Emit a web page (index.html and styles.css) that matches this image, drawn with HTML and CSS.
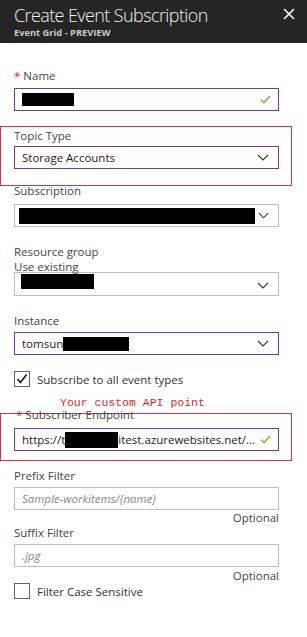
FILE: index.html
```html
<!DOCTYPE html>
<html>
<head>
<meta charset="utf-8">
<link rel="stylesheet" href="styles.css">
</head>
<body>
<div class="blade">
  <header class="head">
    <div class="head-text">
      <div class="title">Create Event Subscription</div>
      <div class="subtitle">Event Grid - PREVIEW</div>
    </div>
    <svg class="close" width="12" height="12" viewBox="0 0 12 12"><path d="M1 1L11 11M11 1L1 11" stroke="#fff" stroke-width="1.6"/></svg>
  </header>

  <div class="form">
    <div class="field f-name">
      <div class="label"><span class="star">*</span> Name</div>
      <div class="box active">
        <span class="redact r-name"></span>
        <svg class="check" width="11" height="9" viewBox="0 0 11 9"><path d="M1 4.5L4 7.5L10 1" fill="none" stroke="#7ab648" stroke-width="1.6"/></svg>
      </div>
    </div>

    <div class="annot a1">
      <div class="field f-topic">
        <div class="label">Topic Type</div>
        <div class="box active">
          <span class="val">Storage Accounts</span>
          <svg class="chev" width="12" height="7" viewBox="0 0 12 7"><path d="M1 1L6 6L11 1" fill="none" stroke="#333" stroke-width="1.1"/></svg>
        </div>
      </div>
    </div>

    <div class="field f-sub">
      <div class="label">Subscription</div>
      <div class="box">
        <span class="redact r-sub"></span>
        <svg class="chev" width="12" height="7" viewBox="0 0 12 7"><path d="M1 1L6 6L11 1" fill="none" stroke="#333" stroke-width="1.1"/></svg>
      </div>
    </div>

    <div class="field f-rg">
      <div class="label">Resource group</div>
      <div class="label">Use existing</div>
      <div class="box tall">
        <span class="redact r-rg"></span>
        <svg class="chev" width="12" height="7" viewBox="0 0 12 7"><path d="M1 1L6 6L11 1" fill="none" stroke="#333" stroke-width="1.1"/></svg>
      </div>
    </div>

    <div class="field f-inst">
      <div class="label">Instance</div>
      <div class="box active">
        <span class="val">tomsun</span><span class="redact r-inst"></span>
        <svg class="chev" width="12" height="7" viewBox="0 0 12 7"><path d="M1 1L6 6L11 1" fill="none" stroke="#333" stroke-width="1.1"/></svg>
      </div>
    </div>

    <label class="cb-row cb-all">
      <span class="cb"><svg width="14" height="14" viewBox="0 0 14 14"><path d="M2.5 7L5.5 10.5L11.5 2.5" fill="none" stroke="#111" stroke-width="1.5"/></svg></span>
      <span class="cb-text">Subscribe to all event types</span>
    </label>

    <div class="note">Your custom API point</div>

    <div class="annot a2">
      <div class="field f-end">
        <div class="label lbl-end"><span class="star">*</span> Subscriber Endpoint</div>
        <div class="box active">
          <span class="val">https://t</span><span class="redact r-end"></span><span class="val url-rest">itest.azurewebsites.net/...</span>
          <svg class="check" width="11" height="9" viewBox="0 0 11 9"><path d="M1 4.5L4 7.5L10 1" fill="none" stroke="#7ab648" stroke-width="1.6"/></svg>
        </div>
      </div>
    </div>

    <div class="field f-prefix">
      <div class="label">Prefix Filter</div>
      <div class="box"><span class="ph">Sample-workitems/{name}</span></div>
      <div class="optional">Optional</div>
    </div>

    <div class="field f-suffix">
      <div class="label">Suffix Filter</div>
      <div class="box"><span class="ph">.jpg</span></div>
      <div class="optional">Optional</div>
    </div>

    <label class="cb-row cb-case">
      <span class="cb"></span>
      <span class="cb-text">Filter Case Sensitive</span>
    </label>
  </div>
</div>
</body>
</html>
```

FILE: styles.css
```css
* { box-sizing: border-box; }
html, body { margin: 0; padding: 0; background: #fff; }
body {
  width: 307px;
  height: 637px;
  overflow: hidden;
  font-family: "Open Sans", "Noto Sans", sans-serif;
  color: #404040;
}
.head {
  height: 43px;
  background: #252525;
  display: flex;
  justify-content: space-between;
  align-items: flex-start;
  padding: 0 12px 0 14px;
}
.title {
  font-size: 18px;
  font-weight: 300;
  color: #f2f2f2;
  line-height: 22px;
  margin-top: 4px;
  letter-spacing: -0.6px;
}
.subtitle {
  font-size: 9.3px;
  font-weight: 700;
  color: #c8c8c8;
  line-height: 12px;
  margin-top: 1px;
}
.close { margin-top: 8px; }

.form { padding: 0 0 0 14px; }
.label {
  font-size: 11.5px;
  line-height: 15px;
  color: #444;
}
.star { color: #c8102e; }
.box {
  width: 265px;
  height: 23px;
  border: 1px solid #bdbdbd;
  display: flex;
  align-items: center;
  padding: 0 7px;
  font-size: 11.5px;
  color: #222;
  margin-top: 4px;
}
.box.active { border-color: #74389a; }
.box .check { margin-left: auto; margin-right: 0; }
.box .chev { margin-left: auto; margin-right: 2px; }
.redact { display: inline-block; background: #000; flex: none; }
.val { white-space: nowrap; }

.f-name { margin-top: 25px; }
.f-name .box { margin-top: 5px; }
.r-name { width: 52px; height: 13px; }

.annot { border: 1px solid #c9384f; margin-left: -14px; padding-left: 13px; width: 292px; }
.a1 { margin-top: 15px; height: 60px; }
.f-topic { margin-top: 1px; }
.f-topic .box { margin-top: 3px; }

.f-sub { margin-top: -3px; }
.f-sub .box { margin-top: 6px; }
.r-sub { width: 236px; height: 16px; margin-left: -3px; }
.f-sub .chev { margin-left: 3px; }

.f-rg { margin-top: 17px; }
.box.tall { height: 24px; margin-top: -2px; align-items: flex-start; }
.box.tall .chev { margin-top: 9px; }
.r-rg { width: 73px; height: 15px; margin-left: -1px; margin-top: 1px; }

.f-inst { margin-top: 17px; }
.r-inst { width: 66px; height: 14px; }

.cb-row { display: flex; align-items: center; font-size: 11.5px; color: #333; height: 16px; }
.cb {
  width: 16px; height: 16px;
  border: 1px solid #666;
  display: flex; align-items: center; justify-content: center;
  margin-right: 7px;
  flex: none;
}
.cb-all { margin-top: 16px; }

.note {
  font-family: "Liberation Mono", monospace;
  font-size: 11.5px;
  color: #d92632;
  line-height: 15px;
  margin: 8px 0 0 46px;
}

.a2 { margin-top: 3px; height: 48px; }
.lbl-end { margin-top: -7px; }
.lbl-end .star { margin-left: 2px; }
.f-end .box { margin-top: 6px; }
.r-end { width: 53px; height: 16px; }
.url-rest { letter-spacing: 0; }

.f-prefix { margin-top: 7px; }
.ph { font-style: italic; color: #888; }
.optional { width: 265px; text-align: right; font-size: 11.5px; line-height: 15px; color: #444; }
.f-suffix { margin-top: 0; }
.f-suffix .optional { margin-top: 1px; }
.cb-case { margin-top: 0; }
```
